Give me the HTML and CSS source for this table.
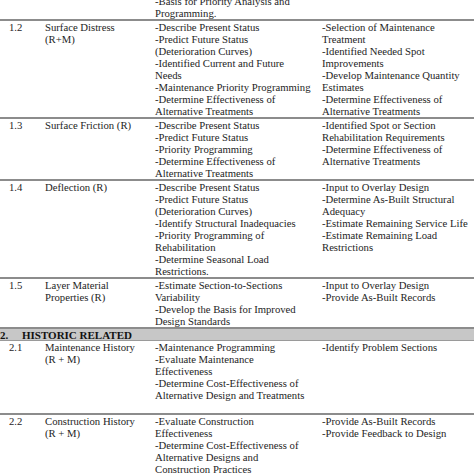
FILE: index.html
```html
<!DOCTYPE html>
<html>
<head>
<meta charset="utf-8">
<link rel="stylesheet" href="styles.css">
</head>
<body>
<div class="table">
  <div class="row first">
    <div class="c num"></div>
    <div class="c item"></div>
    <div class="c use">
      <div>-Basis for Priority Analysis and</div>
      <div>Programming.</div>
    </div>
    <div class="c app"></div>
  </div>

  <div class="row">
    <div class="c num">1.2</div>
    <div class="c item"><div>Surface Distress</div><div>(R+M)</div></div>
    <div class="c use">
      <div>-Describe Present Status</div>
      <div>-Predict Future Status</div>
      <div>(Deterioration Curves)</div>
      <div>-Identified Current and Future</div>
      <div>Needs</div>
      <div>-Maintenance Priority Programming</div>
      <div>-Determine Effectiveness of</div>
      <div>Alternative Treatments</div>
    </div>
    <div class="c app">
      <div>-Selection of Maintenance</div>
      <div>Treatment</div>
      <div>-Identified Needed Spot</div>
      <div>Improvements</div>
      <div>-Develop Maintenance Quantity</div>
      <div>Estimates</div>
      <div>-Determine Effectiveness of</div>
      <div>Alternative Treatments</div>
    </div>
  </div>

  <div class="row">
    <div class="c num">1.3</div>
    <div class="c item"><div>Surface Friction (R)</div></div>
    <div class="c use">
      <div>-Describe Present Status</div>
      <div>-Predict Future Status</div>
      <div>-Priority Programming</div>
      <div>-Determine Effectiveness of</div>
      <div>Alternative Treatments</div>
    </div>
    <div class="c app">
      <div>-Identified Spot or Section</div>
      <div>Rehabilitation Requirements</div>
      <div>-Determine Effectiveness of</div>
      <div>Alternative Treatments</div>
    </div>
  </div>

  <div class="row">
    <div class="c num">1.4</div>
    <div class="c item"><div>Deflection (R)</div></div>
    <div class="c use">
      <div>-Describe Present Status</div>
      <div>-Predict Future Status</div>
      <div>(Deterioration Curves)</div>
      <div>-Identify Structural Inadequacies</div>
      <div>-Priority Programming of</div>
      <div>Rehabilitation</div>
      <div>-Determine Seasonal Load</div>
      <div>Restrictions.</div>
    </div>
    <div class="c app">
      <div>-Input to Overlay Design</div>
      <div>-Determine As-Built Structural</div>
      <div>Adequacy</div>
      <div>-Estimate Remaining Service Life</div>
      <div>-Estimate Remaining Load</div>
      <div>Restrictions</div>
    </div>
  </div>

  <div class="row">
    <div class="c num">1.5</div>
    <div class="c item"><div>Layer Material</div><div>Properties (R)</div></div>
    <div class="c use">
      <div>-Estimate Section-to-Sections</div>
      <div>Variability</div>
      <div>-Develop the Basis for Improved</div>
      <div>Design Standards</div>
    </div>
    <div class="c app">
      <div>-Input to Overlay Design</div>
      <div>-Provide As-Built Records</div>
    </div>
  </div>

  <div class="section">
    <span class="sec-num">2.</span><span class="sec-title">HISTORIC RELATED</span>
  </div>

  <div class="row nobar">
    <div class="c num">2.1</div>
    <div class="c item"><div>Maintenance History</div><div>(R + M)</div></div>
    <div class="c use">
      <div>-Maintenance Programming</div>
      <div>-Evaluate Maintenance</div>
      <div>Effectiveness</div>
      <div>-Determine Cost-Effectiveness of</div>
      <div>Alternative Design and Treatments</div>
      <div>&nbsp;</div>
    </div>
    <div class="c app">
      <div>-Identify Problem Sections</div>
    </div>
  </div>

  <div class="row">
    <div class="c num">2.2</div>
    <div class="c item"><div>Construction History</div><div>(R + M)</div></div>
    <div class="c use">
      <div>-Evaluate Construction</div>
      <div>Effectiveness</div>
      <div>-Determine Cost-Effectiveness of</div>
      <div>Alternative Designs and</div>
      <div>Construction Practices</div>
    </div>
    <div class="c app">
      <div>-Provide As-Built Records</div>
      <div>-Provide Feedback to Design</div>
    </div>
  </div>
</div>
</body>
</html>
```

FILE: styles.css
```css
html, body {
  margin: 0;
  padding: 0;
  background: #ffffff;
}

body {
  width: 474px;
  height: 474px;
  overflow: hidden;
  font-family: "Liberation Serif", "Times New Roman", serif;
  font-size: 10.7px;
  line-height: 12px;
  color: #1e1e1e;
}

.table {
  margin-top: -5px;
  display: flex;
  flex-direction: column;
}

.row {
  display: grid;
  grid-template-columns: 45px 110px 167px 1fr;
  border-top: 2px solid #8c8c8c;
}

.row.first {
  border-top: none;
}

.row.nobar {
  border-top: none;
}

.c div {
  white-space: nowrap;
}

.num {
  padding-left: 9px;
}

.section {
  display: flex;
  align-items: center;
  height: 11px;
  background: #c7c7c7;
  border-top: 2px solid #8c8c8c;
  border-bottom: 1px solid #9a9a9a;
  font-weight: bold;
  font-size: 11px;
  color: #111;
}

.sec-num {
  width: 22px;
}
```
